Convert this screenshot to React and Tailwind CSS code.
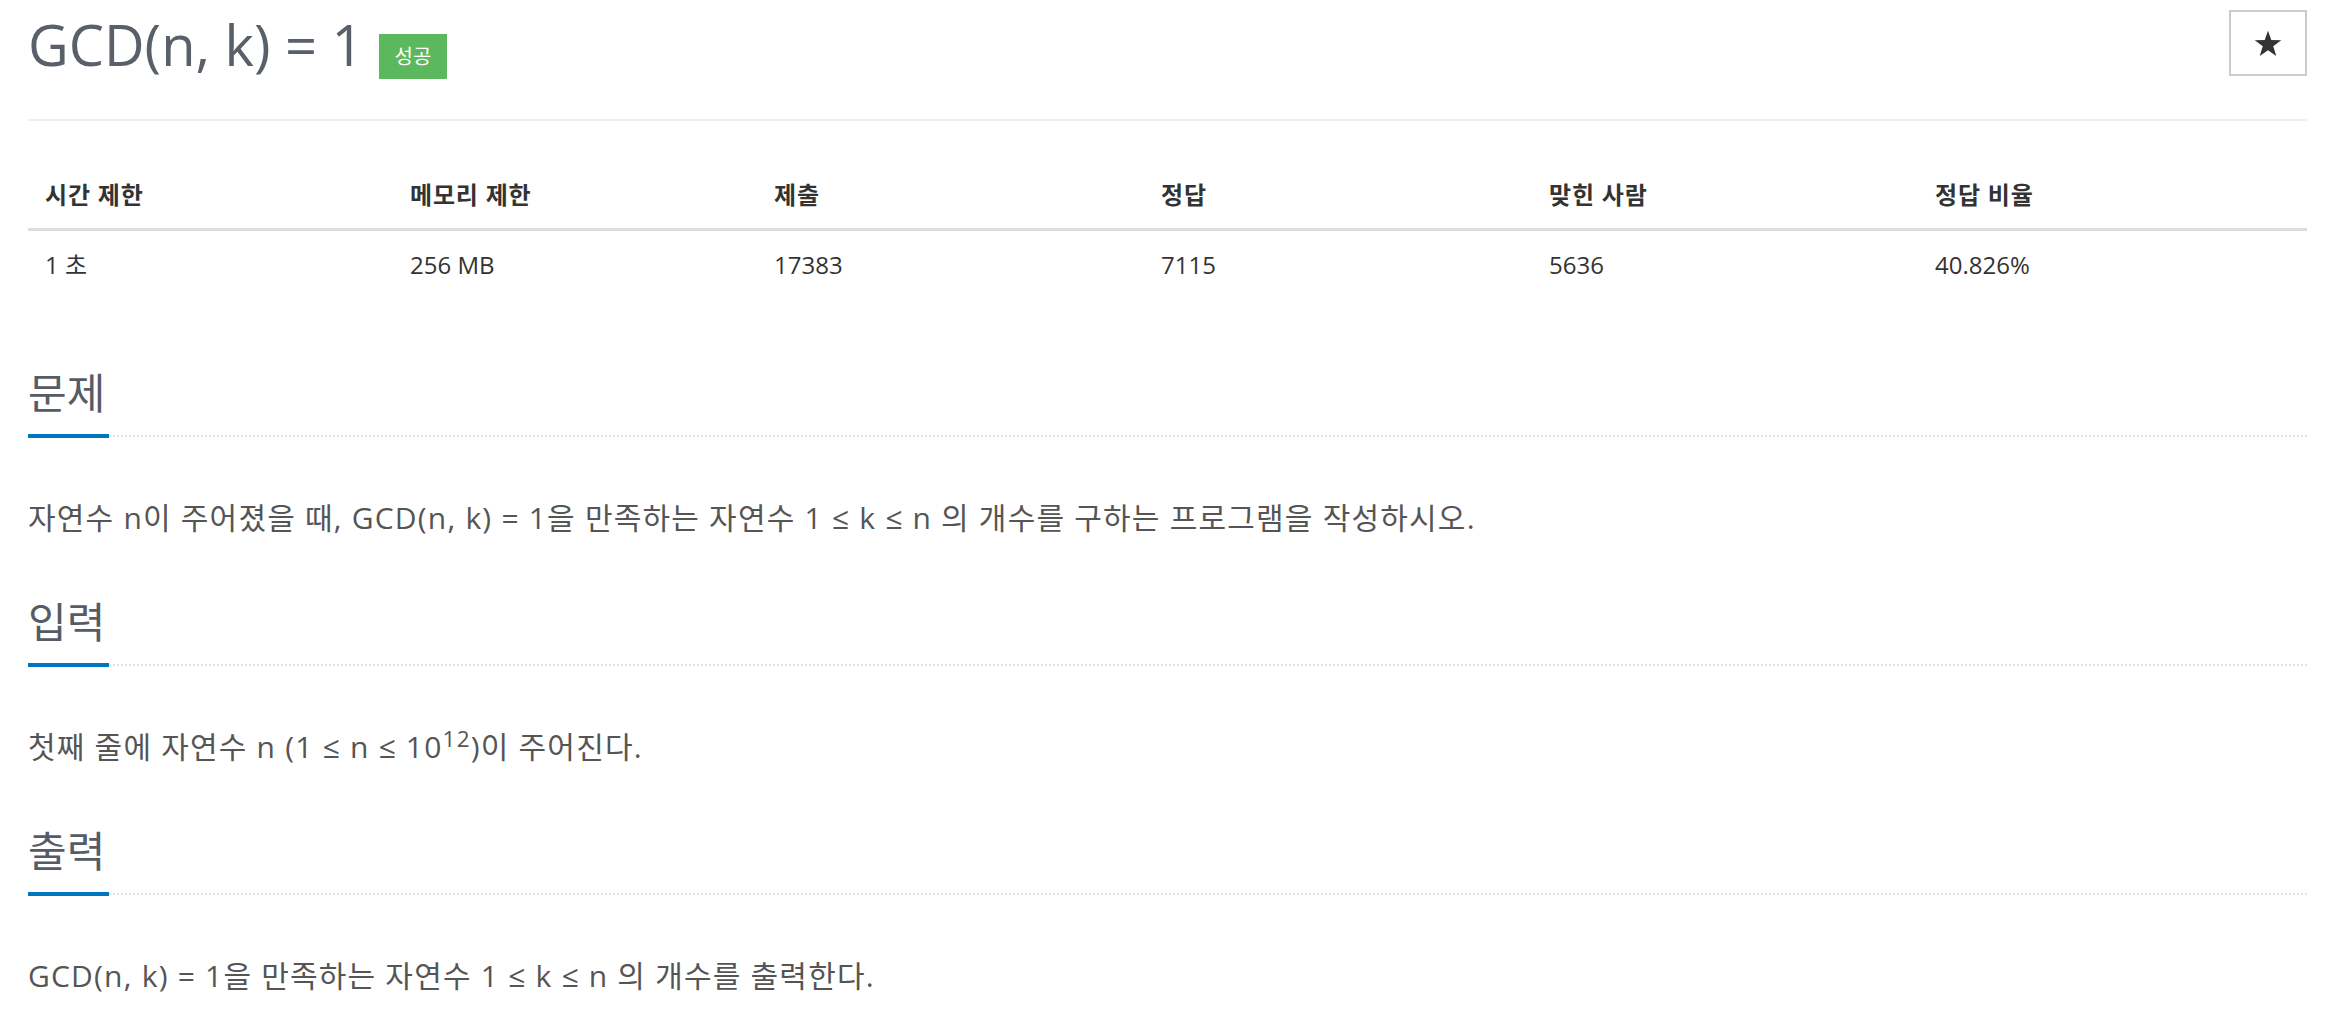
import { useState } from 'react';

const stats = [
  { label: '시간 제한', value: '1 초' },
  { label: '메모리 제한', value: '256 MB' },
  { label: '제출', value: '17383' },
  { label: '정답', value: '7115' },
  { label: '맞힌 사람', value: '5636' },
  { label: '정답 비율', value: '40.826%' },
];

function SectionHeader({ title }) {
  return (
    <div>
      <h2 className="text-[42px] leading-[52px] text-[#555c66] font-normal">{title}</h2>
      <div className="mt-[15px] flex items-center">
        <div className="w-[81px] h-[4px] bg-[#0076c0]" />
        <div className="flex-1 border-t-2 border-dotted border-[#e1e5ea]" />
      </div>
    </div>
  );
}

function Section({ title, children }) {
  return (
    <section className="mt-[58px] first:mt-[68px]">
      <SectionHeader title={title} />
      <div className="mt-[60px] text-[30px] leading-[40px] tracking-[1.2px] text-[#555]">{children}</div>
    </section>
  );
}

function App() {
  const [starred, setStarred] = useState(false);

  return (
    <div className="min-h-screen bg-white pl-[28px] pr-[30px] pt-[10px] font-['Open_Sans','Noto_Sans_CJK_KR',sans-serif]">
      <div className="flex items-start justify-between">
        <h1 className="mt-[4px] flex items-start text-[56px] leading-[60px] font-normal text-[#59606a]">
          <span>GCD(n, k) = 1</span>
          <span className="ml-[15px] mt-[20px] h-[45px] px-[16px] flex items-center bg-[#5cb85c] text-white text-[20px] leading-none">
            성공
          </span>
        </h1>
        <button
          type="button"
          onClick={() => setStarred(!starred)}
          className="w-[78px] h-[66px] border-2 border-[#cccccc] bg-white flex items-center justify-center"
        >
          <svg width="28" height="27" viewBox="0 0 24 23">
            <polygon
              points="12,0.5 14.8,8.6 23.4,8.7 16.5,13.9 19.1,22.2 12,17.2 4.9,22.2 7.5,13.9 0.6,8.7 9.2,8.6"
              fill="#333"
            />
          </svg>
        </button>
      </div>

      <div className="mt-[40px] h-[2px] bg-[#eeeeee]" />

      <div className="mt-[40px] text-[24px] text-[#333]">
        <div className="grid grid-cols-[365px_364px_387px_388px_386px_1fr] h-[70px] items-center border-b-[3px] border-[#dddddd] font-bold tracking-[0.8px]">
          {stats.map((item) => (
            <div key={item.label} className="pl-[17px]">{item.label}</div>
          ))}
        </div>
        <div className="grid grid-cols-[365px_364px_387px_388px_386px_1fr] h-[68px] items-center">
          {stats.map((item) => (
            <div key={item.label} className="pl-[17px]">{item.value}</div>
          ))}
        </div>
      </div>

      <div>
        <Section title="문제">
          자연수 n이 주어졌을 때, GCD(n, k) = 1을 만족하는 자연수 1 ≤ k ≤ n 의 개수를 구하는 프로그램을 작성하시오.
        </Section>
        <Section title="입력">
          첫째 줄에 자연수 n (1 ≤ n ≤ 10<sup>12</sup>)이 주어진다.
        </Section>
        <Section title="출력">
          GCD(n, k) = 1을 만족하는 자연수 1 ≤ k ≤ n 의 개수를 출력한다.
        </Section>
      </div>
    </div>
  );
}

export default App;
